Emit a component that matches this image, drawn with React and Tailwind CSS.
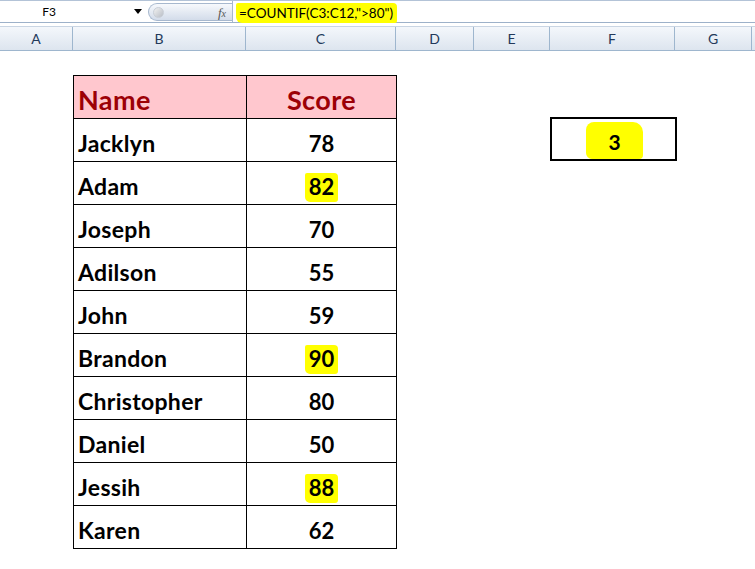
const columns = [
  { key: "A", w: 73 },
  { key: "B", w: 173 },
  { key: "C", w: 150 },
  { key: "D", w: 78 },
  { key: "E", w: 76 },
  { key: "F", w: 125 },
  { key: "G", w: 77 },
];

const rows = [
  { name: "Jacklyn", score: 78 },
  { name: "Adam", score: 82 },
  { name: "Joseph", score: 70 },
  { name: "Adilson", score: 55 },
  { name: "John", score: 59 },
  { name: "Brandon", score: 90 },
  { name: "Christopher", score: 80 },
  { name: "Daniel", score: 50 },
  { name: "Jessih", score: 88 },
  { name: "Karen", score: 62 },
];

function FormulaBar() {
  return (
    <div className="flex h-[23px] border-t border-t-[#b3c3d7] border-b border-b-[#9db1c9] bg-white">
      {/* Name box */}
      <div className="w-[146px] flex items-center">
        <div className="w-[98px] text-center text-[12px] text-black">F3</div>
        <div className="flex-1 flex justify-end pr-[4px]">
          <svg width="8" height="5" viewBox="0 0 8 5">
            <path d="M0 0h8L4 5z" fill="#000" />
          </svg>
        </div>
      </div>
      {/* fx pill */}
      <div className="ml-[2px] mt-[2px] mb-[1px] w-[84px] rounded-l-full border border-r-0 border-[#a7b8ce] bg-gradient-to-b from-[#f7f9fc] to-[#d3dcea] flex items-center justify-between pl-[4px] pr-[6px]">
        <div className="w-[11px] h-[11px] rounded-full bg-gradient-to-br from-[#f2f2f2] to-[#b9bec6] border border-[#c9ced6]" />
        <span className="text-[13px] italic text-[#555] leading-none" style={{ fontFamily: '"Liberation Serif", serif' }}>
          f<span className="text-[10px]">x</span>
        </span>
      </div>
      {/* Formula */}
      <div className="flex-1 border-l border-[#a7b8ce] flex items-stretch pl-[3px]">
        <div className="mt-[2px] -mb-[1px] bg-[#ffff00] rounded-[2px_4px_2px_6px] pl-[3px] pr-[4px] flex items-center text-[13.5px] text-black">
          =COUNTIF(C3:C12,"&gt;80")
        </div>
      </div>
    </div>
  );
}

function ColumnHeaders() {
  return (
    <div className="flex h-[25px] mt-[3px] border-t border-t-[#c9d5e3] border-b border-b-[#9eb6ce] bg-gradient-to-b from-[#f4f7fb] to-[#dde5ef]">
      {columns.map((c) => (
        <div
          key={c.key}
          className="flex items-center justify-center border-r border-[#9eb6ce] text-[14px] text-[#23395a] shrink-0"
          style={{ width: c.w }}
        >
          {c.key}
        </div>
      ))}
    </div>
  );
}

function Marker({ children, className = "" }) {
  return (
    <span className={`inline-block bg-[#ffff00] ${className}`}>{children}</span>
  );
}

export default function App() {
  return (
    <div
      className="w-[755px] h-[569px] bg-white overflow-hidden"
      style={{ fontFamily: 'Lato, "Liberation Sans", sans-serif' }}
    >
      <FormulaBar />
      <ColumnHeaders />

      <div className="flex items-start">
        <table className="ml-[73px] mt-[24px] border-collapse">
          <thead>
            <tr className="h-[43px] bg-[#ffc7ce]">
              <th className="w-[173px] border border-black text-left align-bottom pl-[4px] pb-[5px] text-[27px] tracking-[0.4px] font-bold text-[#9c0006] leading-none">
                Name
              </th>
              <th className="w-[150px] border border-black text-center align-bottom pb-[5px] text-[27px] tracking-[0.4px] font-bold text-[#9c0006] leading-none">
                Score
              </th>
            </tr>
          </thead>
          <tbody>
            {rows.map((r) => (
              <tr key={r.name} className="h-[43px]">
                <td className="border border-black align-bottom pl-[4px] pb-[6px] text-[23px] tracking-[0.3px] font-bold text-black leading-none">
                  {r.name}
                </td>
                <td className="border border-black align-bottom text-center pb-[6px] text-[22px] font-bold text-black leading-none">
                  {r.score > 80 ? (
                    <Marker className="px-[4px] pt-[3px] pb-[4px] -mb-[4px] rounded-[2px_4px_3px_5px]">
                      {r.score}
                    </Marker>
                  ) : (
                    r.score
                  )}
                </td>
              </tr>
            ))}
          </tbody>
        </table>

        <div className="ml-[153px] mt-[66px] w-[127px] h-[44px] border-2 border-black flex justify-center">
          <div className="mt-[3px] ml-[2px] w-[57px] h-[37px] bg-[#ffff00] rounded-[8px_10px_4px_6px] flex items-center justify-center pt-[3px] text-[21px] font-bold text-black">
            3
          </div>
        </div>
      </div>
    </div>
  );
}
